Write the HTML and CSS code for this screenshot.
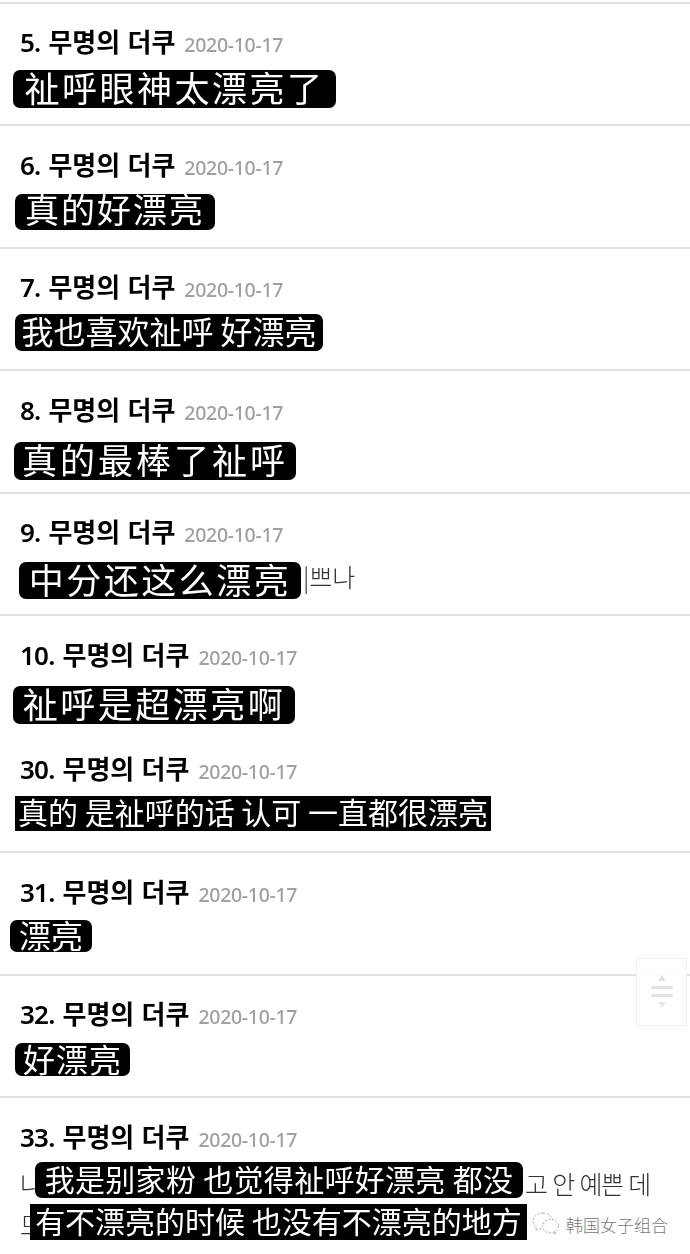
FILE: index.html
```html
<!DOCTYPE html>
<html lang="ko">
<head>
<meta charset="utf-8">
<title>무명의 더쿠</title>
<link rel="stylesheet" href="styles.css">
</head>
<body>
<main class="page">
  <section class="row">
    <div class="head"><b class="num">5.</b><b class="name">무명의 더쿠</b><span class="date">2020-10-17</span></div>
    <div class="line"><span class="label l5" lang="zh">祉呼眼神太漂亮了</span></div>
  </section>
  <section class="row">
    <div class="head"><b class="num">6.</b><b class="name">무명의 더쿠</b><span class="date">2020-10-17</span></div>
    <div class="line"><span class="label l6" lang="zh">真的好漂亮</span></div>
  </section>
  <section class="row">
    <div class="head"><b class="num">7.</b><b class="name">무명의 더쿠</b><span class="date">2020-10-17</span></div>
    <div class="line"><span class="label l7" lang="zh">我也喜欢祉呼 好漂亮</span></div>
  </section>
  <section class="row">
    <div class="head"><b class="num">8.</b><b class="name">무명의 더쿠</b><span class="date">2020-10-17</span></div>
    <div class="line"><span class="label l8" lang="zh">真的最棒了祉呼</span></div>
  </section>
  <section class="row">
    <div class="head"><b class="num">9.</b><b class="name">무명의 더쿠</b><span class="date">2020-10-17</span></div>
    <div class="line"><span class="label l9" lang="zh">中分还这么漂亮</span><span class="rest">|쁘나</span></div>
  </section>
  <section class="row row-short">
    <div class="head"><b class="num">10.</b><b class="name">무명의 더쿠</b><span class="date">2020-10-17</span></div>
    <div class="line"><span class="label l10" lang="zh">祉呼是超漂亮啊</span></div>
  </section>
  <section class="row">
    <div class="head"><b class="num">30.</b><b class="name">무명의 더쿠</b><span class="date">2020-10-17</span></div>
    <div class="line"><span class="label l30" lang="zh">真的 是祉呼的话 认可 一直都很漂亮</span></div>
  </section>
  <section class="row">
    <div class="head"><b class="num">31.</b><b class="name">무명의 더쿠</b><span class="date">2020-10-17</span></div>
    <div class="line"><span class="label l31" lang="zh">漂亮</span></div>
  </section>
  <section class="row">
    <div class="head"><b class="num">32.</b><b class="name">무명의 더쿠</b><span class="date">2020-10-17</span></div>
    <div class="line"><span class="label l32" lang="zh">好漂亮</span></div>
  </section>
  <section class="row row-last">
    <div class="head"><b class="num">33.</b><b class="name">무명의 더쿠</b><span class="date">2020-10-17</span></div>
    <p class="body">나 <span class="body-end">고 안 예쁜 데</span></p>
    <p class="body">모</p>
    <span class="label over-a" lang="zh">我是别家粉 也觉得祉呼好漂亮 都没</span>
    <span class="label over-b" lang="zh">有不漂亮的时候 也没有不漂亮的地方</span>
  </section>
</main>

<aside class="scroller" aria-label="scroll">
  <svg class="scroller-icon" width="24" height="40" viewBox="0 0 24 40">
    <path d="M12 3 L16 9 L8 9 Z" fill="#e2e2e2"/>
    <rect x="1" y="14" width="22" height="3" fill="#e2e2e2"/>
    <rect x="1" y="22" width="22" height="3" fill="#e2e2e2"/>
    <path d="M12 36 L16 30 L8 30 Z" fill="#e8e8e8"/>
  </svg>
</aside>

<aside class="mark">
  <svg class="mark-icon" width="28" height="26" viewBox="0 0 28 26" fill="none" stroke="#a8a8a8" stroke-width="1" stroke-dasharray="2 1.6">
    <path d="M11 2 C5 2 1 6 1 10.500 C1 13 2.300 15 4.300 16.500 L3.500 19.500 L7 17.700 C8.500 18.200 10 18.400 11.500 18.300"/>
    <path d="M11 2 C16 2 19.500 5 20.300 8.500"/>
    <ellipse cx="18.500" cy="15" rx="8" ry="6.700"/>
    <path d="M23 21 L24 23.500 L20.500 21.600"/>
  </svg>
  <span class="mark-text" lang="zh">韩国女子组合</span>
</aside>
</body>
</html>
```

FILE: styles.css
```css
* { box-sizing: border-box; }

html, body {
  margin: 0;
  height: 1254px;
  overflow: hidden;
  background: #fff;
}

body {
  position: relative;
  font-family: "Noto Sans CJK KR", "Noto Sans", sans-serif;
  color: #111;
}

.page {
  margin-top: 1.500px;
  border-top: 2px solid #e2e2e2;
  filter: blur(0.35px);
}

.row {
  position: relative;
  height: 122.500px;
  padding-top: 19.500px;
  border-bottom: 2px solid #e2e2e2;
}

.row-short {
  height: 114.500px;
  border-bottom: 0;
}

.row-last {
  height: 160px;
  border-bottom: 0;
}

.head {
  display: flex;
  align-items: baseline;
  height: 36px;
  padding-left: 20px;
  line-height: 36px;
}

.num {
  font-family: "Noto Sans", sans-serif;
  font-size: 26px;
  font-weight: 600;
  letter-spacing: -0.8px;
  margin-right: 8px;
  color: #000;
}

.name {
  font-size: 26px;
  font-weight: 700;
  letter-spacing: 0;
  margin-right: 9px;
  color: #000;
}

.date {
  font-family: "Noto Sans", sans-serif;
  font-size: 19.500px;
  font-weight: 500;
  letter-spacing: -0.3px;
  color: #a0a0a0;
}

.line {
  display: flex;
  align-items: center;
}

.label {
  display: inline-flex;
  align-items: center;
  justify-content: center;
  flex: none;
  padding-bottom: 5px;
  white-space: pre;
  background: #000;
  color: #fff;
  border-radius: 7px;
  font-family: "Noto Sans CJK SC", sans-serif;
  font-weight: 400;
  line-height: 1;
}

.l5  { margin: 11px 0 0 13px; width: 323px; height: 38px; font-size: 35px; letter-spacing: 2.500px; }
.l6  { margin: 12px 0 0 15px; width: 200px; height: 36px; font-size: 34px; letter-spacing: 2px; }
.l7  { margin: 10px 0 0 15px; width: 308px; height: 37px; font-size: 32px; }
.l8  { margin: 15px 0 0 14px; width: 282px; height: 38px; font-size: 35px; letter-spacing: 3px; }
.l9  { margin: 13px 0 0 19px; width: 282px; height: 37px; font-size: 35px; letter-spacing: 2.500px; }
.l10 { margin: 14px 0 0 13px; width: 282px; height: 38px; font-size: 35px; letter-spacing: 2.500px; }
.l30 { margin: 10px 0 0 15px; width: 476px; height: 35px; font-size: 30px; border-radius: 0; }
.l31 { margin: 11px 0 0 10px; width: 82px;  height: 32px; font-size: 32px; padding-bottom: 4px; }
.l32 { margin: 12px 0 0 15px; width: 115px; height: 33px; font-size: 32px; letter-spacing: 1px; padding-bottom: 4px; }

.rest {
  margin: 5px 0 0 2px;
  font-size: 25px;
  font-weight: 300;
  color: #333;
  line-height: 1;
}

.body {
  margin: 0;
  height: 41px;
  padding-left: 20px;
  font-size: 25px;
  font-weight: 300;
  line-height: 41px;
  letter-spacing: -1.400px;
  white-space: pre;
  color: #333;
}

.row-last .head + .body {
  margin-top: 9px;
}

.body-end {
  position: absolute;
  left: 525px;
}

.over-a,
.over-b {
  position: absolute;
  font-size: 30px;
}

.over-a {
  left: 35px;
  top: 64px;
  width: 488px;
  height: 36px;
  letter-spacing: 0.300px;
}

.over-b {
  left: 30px;
  top: 106px;
  width: 497px;
  height: 36px;
  border-radius: 0;
}

.scroller {
  position: absolute;
  left: 636px;
  top: 958px;
  width: 51px;
  height: 68px;
  display: flex;
  align-items: center;
  justify-content: center;
  background: rgba(255, 255, 255, 0.9);
  border: 1px solid #f0f0f0;
}

.mark {
  position: absolute;
  left: 532px;
  top: 1211px;
  display: flex;
  align-items: center;
  gap: 6px;
}

.mark-icon { flex: none; }

.mark-text {
  font-family: "Noto Sans CJK SC", sans-serif;
  font-size: 17px;
  font-weight: 300;
  color: #777;
  white-space: nowrap;
}
```
